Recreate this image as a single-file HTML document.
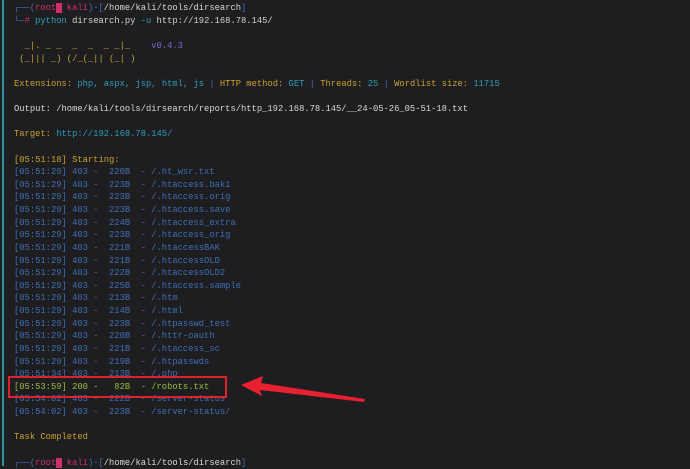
<!DOCTYPE html><html><head><meta charset="utf-8"><style>
body{margin:0;width:690px;height:466px;overflow:hidden;background:#1e1e21;font-family:"Liberation Mono",monospace;font-size:8.8px;}
.t{position:absolute;left:14px;top:2px;line-height:12.63px;white-space:pre;color:#d4d4d4}
.b{color:#3f6fb5}.y{color:#c8a22a}.g{color:#98bd3a}.c{color:#2b9fb8}.p{color:#7b68c8}.r{color:#d0306a}.w{color:#d8d8d8}
.bar{position:absolute;left:2px;top:0;width:2px;height:466px;background:#2a8fa0}
</style></head><body>
<div class="bar"></div>
<div class="t"><span class="b">┌──(</span><span class="r">root</span><span style="background:#d0306a;color:#d0306a">.</span><span class="r"> kali</span><span class="b">)-[</span><span class="w">/home/kali/tools/dirsearch</span><span class="b">]</span>
<span class="b">└─</span><span class="r">#</span> <span class="c">python</span> dirsearch.py <span class="c">-u</span> http://192.168.78.145/

<span class="y">  _|. _ _  _  _  _ _|_    </span><span class="p">v0.4.3</span>
<span class="y"> (_||| _) (/_(_|| (_| )</span>

<span class="y">Extensions: </span><span class="c">php, aspx, jsp, html, js</span><span class="b"> | </span><span class="y">HTTP method: </span><span class="c">GET</span><span class="b"> | </span><span class="y">Threads: </span><span class="c">25</span><span class="b"> | </span><span class="y">Wordlist size: </span><span class="c">11715</span>

<span class="w">Output: /home/kali/tools/dirsearch/reports/http_192.168.78.145/__24-05-26_05-51-18.txt</span>

<span class="y">Target: </span><span class="c">http://192.168.78.145/</span>

<span class="y">[05:51:18] Starting:</span>
<span class="b">[05:51:29] 403 -  220B  - /.ht_wsr.txt
[05:51:29] 403 -  223B  - /.htaccess.bak1
[05:51:29] 403 -  223B  - /.htaccess.orig
[05:51:29] 403 -  223B  - /.htaccess.save
[05:51:29] 403 -  224B  - /.htaccess_extra
[05:51:29] 403 -  223B  - /.htaccess_orig
[05:51:29] 403 -  221B  - /.htaccessBAK
[05:51:29] 403 -  221B  - /.htaccessOLD
[05:51:29] 403 -  222B  - /.htaccessOLD2
[05:51:29] 403 -  225B  - /.htaccess.sample
[05:51:29] 403 -  213B  - /.htm
[05:51:29] 403 -  214B  - /.html
[05:51:29] 403 -  223B  - /.htpasswd_test
[05:51:29] 403 -  220B  - /.httr-oauth
[05:51:29] 403 -  221B  - /.htaccess_sc
[05:51:29] 403 -  219B  - /.htpasswds
[05:51:34] 403 -  213B  - /.php</span>
<span class="g">[05:53:59] 200 -   82B  - /robots.txt</span>
<span class="b">[05:54:02] 403 -  222B  - /server-status
[05:54:02] 403 -  223B  - /server-status/</span>

<span class="y">Task Completed</span>

<span class="b">┌──(</span><span class="r">root</span><span style="background:#d0306a;color:#d0306a">.</span><span class="r"> kali</span><span class="b">)-[</span><span class="w">/home/kali/tools/dirsearch</span><span class="b">]</span></div>
<div style="position:absolute;left:8px;top:376px;width:215px;height:18px;border:2px solid #e0202a"></div>
<svg style="position:absolute;left:0;top:0" width="690" height="466"><polygon points="241,385 263,376 261,383 365,399 364,402 260,390 262,396" fill="#e82030"/></svg>
</body></html>
